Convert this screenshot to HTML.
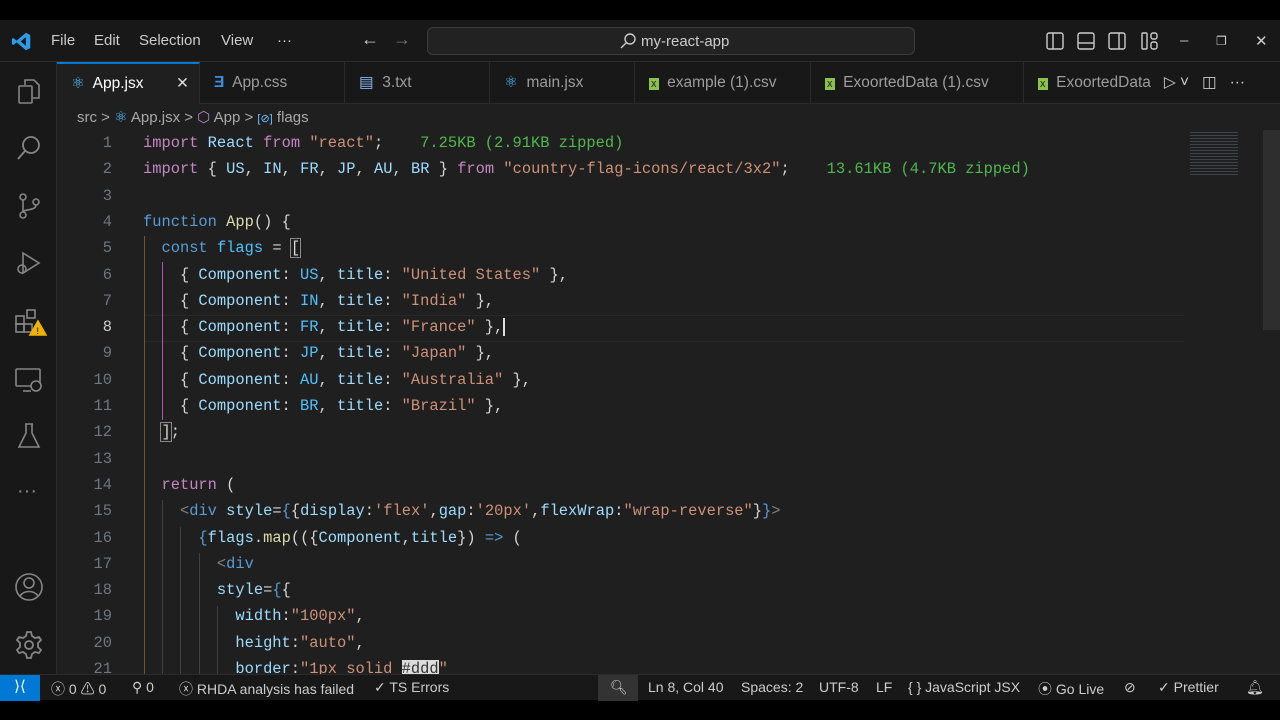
<!DOCTYPE html>
<html><head><meta charset="utf-8"><style>
*{margin:0;padding:0;box-sizing:border-box}
body{width:1280px;height:720px;background:#000;position:relative;overflow:hidden;font-family:"Liberation Sans",sans-serif;color:#ccc}
.abs{position:absolute}
#title{left:0;top:20px;width:1280px;height:42px;background:#181818;border-bottom:1px solid #2b2b2b}
#title .m{position:absolute;top:12px;font-size:15px;color:#ccc}
#search{left:427px;top:27px;width:488px;height:28px;border:1px solid #3c3c3c;border-radius:6px;background:#222;}
#act{left:0;top:62px;width:57px;height:612px;background:#181818;border-right:1px solid #2b2b2b}
#tabs{left:57px;top:62px;width:1223px;height:42px;background:#181818;border-bottom:1px solid #2b2b2b}
.tab{position:absolute;top:0;height:42px;border-right:1px solid #2b2b2b;font-size:15.5px;color:#9d9d9d;line-height:42px;padding-left:14px}
.tab.a{background:#1f1f1f;color:#fff;border-top:2px solid #0078d4;line-height:40px}
#editor{left:57px;top:104px;width:1223px;height:570px;background:#1f1f1f}
#crumb{left:77px;top:108px;font-size:15px;color:#a9a9a9}
.ln{position:absolute;left:60px;width:52px;text-align:right;font-family:"Liberation Mono",monospace;font-size:15.4px;color:#6e7681}
.code{position:absolute;left:143px;font-family:"Liberation Mono",monospace;font-size:15.4px;white-space:pre;color:#d4d4d4}
.k{color:#c586c0}.b{color:#569cd6}.f{color:#dcdcaa}.v{color:#9cdcfe}.c{color:#4fc1ff}.s{color:#ce9178}.g{color:#4eb84e}.p{color:#d4d4d4}.y{color:#ffd700}.pk{color:#da70d6}.bl{color:#179fff}
.guide{position:absolute;width:1px;background:#404040}
#status{left:0;top:674px;width:1280px;height:26px;background:#181818;border-top:1px solid #2b2b2b;font-size:14px;color:#ccc}
#status span{position:absolute;top:4px}
</style></head><body>
<div id="title" class="abs">
 <svg class="abs" style="left:11px;top:11px" width="21" height="21" viewBox="0 0 24 24"><path d="M17 2l5 2.5v15L17 22 6.5 13 2.5 16 1 15V9l1.5-1 4 3L17 2zm0 5l-6 5 6 5z" fill="#2b9de8"/></svg>
 <span class="m" style="left:51px">File</span><span class="m" style="left:94px">Edit</span><span class="m" style="left:139px">Selection</span><span class="m" style="left:221px">View</span><span class="m" style="left:277px">···</span>
 <span class="m" style="left:361px;font-size:18px;top:9px">←</span><span class="m" style="left:393px;font-size:18px;top:9px;color:#777">→</span>
 <span class="m" style="left:1180px;color:#bbb">–</span><span class="m" style="left:1216px;font-size:12px;top:14px">❐</span><span class="m" style="left:1255px">✕</span>
 <svg class="abs" style="left:1045px;top:12px" width="124" height="18" viewBox="0 0 124 18" fill="none" stroke="#ccc" stroke-width="1.4"><rect x="2" y="1" width="16" height="16" rx="2"/><line x1="8" y1="1" x2="8" y2="17"/><rect x="33" y="1" width="16" height="16" rx="2"/><line x1="33" y1="11" x2="49" y2="11"/><rect x="64" y="1" width="16" height="16" rx="2"/><line x1="74" y1="1" x2="74" y2="17"/><rect x="97" y="1" width="5" height="16" rx="1"/><rect x="106" y="1" width="6" height="6" rx="2"/><rect x="106" y="10" width="6" height="7" rx="2"/></svg>
</div>
<div id="search" class="abs"><svg class="abs" style="left:191px;top:4px" width="18" height="18" viewBox="0 0 18 18" fill="none" stroke="#ccc" stroke-width="1.4"><circle cx="11" cy="7" r="5"/><line x1="7.5" y1="10.5" x2="2" y2="16"/></svg><span class="abs" style="left:213px;top:5px;font-size:15px;color:#ccc">my-react-app</span></div>
<div id="act" class="abs">
 <svg class="abs" style="left:15px;top:15px" width="28" height="28" viewBox="0 0 28 28" fill="none" stroke="#868686" stroke-width="1.6"><path d="M10 8V3h9l5 5v13h-6"/><rect x="4" y="9" width="13" height="17" rx="1"/></svg>
 <svg class="abs" style="left:15px;top:72px" width="28" height="28" viewBox="0 0 28 28" fill="none" stroke="#868686" stroke-width="1.8"><circle cx="16" cy="11" r="8"/><line x1="10" y1="17" x2="3" y2="25"/></svg>
 <svg class="abs" style="left:15px;top:130px" width="28" height="28" viewBox="0 0 28 28" fill="none" stroke="#868686" stroke-width="1.6"><circle cx="8" cy="5" r="3"/><circle cx="8" cy="23" r="3"/><circle cx="21" cy="10" r="3"/><path d="M8 8v12M21 13c0 6-13 4-13 7"/></svg>
 <svg class="abs" style="left:15px;top:187px" width="28" height="28" viewBox="0 0 28 28" fill="none" stroke="#868686" stroke-width="1.6"><path d="M8 4l16 10-16 10z"/><circle cx="7" cy="20" r="4"/></svg>
 <svg class="abs" style="left:13px;top:245px" width="34" height="34" viewBox="0 0 34 34" fill="none" stroke="#868686" stroke-width="1.6"><rect x="3" y="9" width="8" height="8"/><rect x="3" y="17" width="8" height="8"/><rect x="11" y="17" width="8" height="8"/><rect x="14" y="3" width="8" height="8"/><path d="M25 14l8 14H17z" fill="#f0b400" stroke="#f0b400"/><text x="23.5" y="27" font-size="9" fill="#000" stroke="none" font-family="Liberation Sans">!</text></svg>
 <svg class="abs" style="left:14px;top:304px" width="30" height="28" viewBox="0 0 30 28" fill="none" stroke="#868686" stroke-width="1.6"><rect x="2" y="3" width="24" height="17" rx="1"/><line x1="9" y1="25" x2="17" y2="25"/><circle cx="22" cy="20" r="5" fill="#181818"/></svg>
 <svg class="abs" style="left:16px;top:360px" width="26" height="28" viewBox="0 0 26 28" fill="none" stroke="#868686" stroke-width="1.6"><path d="M9 2h8M10 2v9L3 25h20L16 11V2"/></svg>
 <span class="abs" style="left:17px;top:418px;color:#868686;font-size:20px">···</span>
 <svg class="abs" style="left:14px;top:510px" width="30" height="30" viewBox="0 0 30 30" fill="none" stroke="#868686" stroke-width="1.6"><circle cx="15" cy="15" r="13"/><circle cx="15" cy="11" r="5"/><path d="M6 24c4-6 14-6 18 0"/></svg>
 <svg class="abs" style="left:14px;top:568px" width="30" height="30" viewBox="0 0 30 30" fill="none" stroke="#868686" stroke-width="1.8"><circle cx="15" cy="15" r="4"/><path d="M13 2h4l1 4 3 2 4-1 2 3-3 3v4l3 3-2 3-4-1-3 2-1 4h-4l-1-4-3-2-4 1-2-3 3-3v-4l-3-3 2-3 4 1 3-2z"/></svg>
</div>
<div id="tabs" class="abs">
 <div class="tab a" style="left:0;width:143px"><span style="color:#4fc1ff">⚛</span>&nbsp; App.jsx<span style="position:absolute;left:119px;color:#ddd">✕</span></div>
 <div class="tab" style="left:143px;width:145px"><span style="color:#3d8fdc;font-weight:bold">Ǝ</span>&nbsp; App.css</div>
 <div class="tab" style="left:288px;width:145px"><span style="color:#8ab4f8">▤</span>&nbsp; 3.txt</div>
 <div class="tab" style="left:433px;width:145px"><span style="color:#4fc1ff">⚛</span>&nbsp; main.jsx</div>
 <div class="tab" style="left:578px;width:176px"><span style="background:#8bc34a;color:#1f1f1f;font-size:11px;padding:0 2px">x</span>&nbsp; example (1).csv</div>
 <div class="tab" style="left:754px;width:213px"><span style="background:#8bc34a;color:#1f1f1f;font-size:11px;padding:0 2px">x</span>&nbsp; ExoortedData (1).csv</div>
 <div class="tab" style="left:967px;width:256px;border:none"><span style="background:#8bc34a;color:#1f1f1f;font-size:11px;padding:0 2px">x</span>&nbsp; ExoortedData&nbsp;&nbsp; <span style="color:#ccc">▷ ˅ &nbsp; ◫ &nbsp; ···</span></div>
</div>
<div id="editor" class="abs"></div>
<div id="crumb" class="abs">src &gt; <span style="color:#4fc1ff">⚛</span> App.jsx &gt; <span style="color:#b180d7">⬡</span> App &gt; <span style="color:#75beff;font-size:11px">[⊘]</span> flags</div>
<div class="abs" style="left:144px;top:315px;width:1040px;height:27px;border-top:1px solid #282828;border-bottom:1px solid #282828"></div>
<div class="abs" style="left:1190px;top:130px;width:48px;height:46px;opacity:.35;background:repeating-linear-gradient(#1f1f1f 0 2px,#7a8aa0 2px 3px)"></div>
<div class="abs" style="left:1263px;top:130px;width:17px;height:200px;background:#2e2e2e"></div>
<div class="guide" style="left:144px;top:236px;height:438px;background:#6a5a2a"></div>
<div class="guide" style="left:162px;top:262px;height:158px;background:#a65fa6"></div>
<div class="guide" style="left:162px;top:500px;height:174px"></div>
<div class="guide" style="left:180px;top:527px;height:147px"></div>
<div class="guide" style="left:199px;top:553px;height:121px"></div>
<div class="guide" style="left:217px;top:606px;height:68px"></div>
<div id="lines"></div>
<div class="abs" style="left:0;top:0;width:1280px;height:20px;background:#000"></div>
<div id="status" class="abs">
 <div class="abs" style="left:0;top:0;width:40px;height:26px;background:#0078d4;color:#fff;font-size:15px;text-align:center;line-height:24px">⟩⟨</div>
 <span style="left:51px">ⓧ 0 ⚠ 0</span><span style="left:132px">⚲ 0</span><span style="left:179px">ⓧ RHDA analysis has failed</span><span style="left:374px">✓ TS Errors</span>
 <div class="abs" style="left:598px;top:0;width:40px;height:26px;background:#333"></div><span style="left:610px">🔍︎</span>
 <span style="left:648px">Ln 8, Col 40</span><span style="left:741px">Spaces: 2</span><span style="left:819px">UTF-8</span><span style="left:876px">LF</span><span style="left:908px">{ } JavaScript JSX</span><span style="left:1038px">⦿ Go Live</span><span style="left:1124px">⊘</span><span style="left:1158px">✓ Prettier</span><span style="left:1246px">🔔︎</span>
</div>
<script>
const L=[
'<span class="k">import</span> <span class="v">React</span> <span class="k">from</span> <span class="s">"react"</span>;    <span class="g">7.25KB (2.91KB zipped)</span>',
'<span class="k">import</span> { <span class="v">US</span>, <span class="v">IN</span>, <span class="v">FR</span>, <span class="v">JP</span>, <span class="v">AU</span>, <span class="v">BR</span> } <span class="k">from</span> <span class="s">"country-flag-icons/react/3x2"</span>;    <span class="g">13.61KB (4.7KB zipped)</span>',
'',
'<span class="b">function</span> <span class="f">App</span>() {',
'  <span class="b">const</span> <span class="c">flags</span> = <span style="outline:1px solid #888">[</span>',
'    { <span class="v">Component</span>: <span class="c">US</span>, <span class="v">title</span>: <span class="s">"United States"</span> },',
'    { <span class="v">Component</span>: <span class="c">IN</span>, <span class="v">title</span>: <span class="s">"India"</span> },',
'    { <span class="v">Component</span>: <span class="c">FR</span>, <span class="v">title</span>: <span class="s">"France"</span> },<span style="border-left:2px solid #ddd"></span>',
'    { <span class="v">Component</span>: <span class="c">JP</span>, <span class="v">title</span>: <span class="s">"Japan"</span> },',
'    { <span class="v">Component</span>: <span class="c">AU</span>, <span class="v">title</span>: <span class="s">"Australia"</span> },',
'    { <span class="v">Component</span>: <span class="c">BR</span>, <span class="v">title</span>: <span class="s">"Brazil"</span> },',
'  <span style="outline:1px solid #888">]</span>;',
'',
'  <span class="k">return</span> (',
'    <span style="color:#808080">&lt;</span><span class="b">div</span> <span class="v">style</span>=<span class="b">{</span>{<span class="v">display</span>:<span class="s">\'flex\'</span>,<span class="v">gap</span>:<span class="s">\'20px\'</span>,<span class="v">flexWrap</span>:<span class="s">"wrap-reverse"</span>}<span class="b">}</span><span style="color:#808080">&gt;</span>',
'      <span class="b">{</span><span class="v">flags</span>.<span class="f">map</span>(({<span class="v">Component</span>,<span class="v">title</span>}) <span class="b">=&gt;</span> (',
'        <span style="color:#808080">&lt;</span><span class="b">div</span>',
'        <span class="v">style</span>=<span class="b">{</span>{',
'          <span class="v">width</span>:<span class="s">"100px"</span>,',
'          <span class="v">height</span>:<span class="s">"auto"</span>,',
'          <span class="v">border</span>:<span class="s">"1px solid <span style="background:#ddd;color:#333">#ddd</span>"</span>'];
let h='';
L.forEach((t,i)=>{const y=143+i*26.3-9;
h+=`<div class="ln" style="top:${y}px;${i==7?'color:#ccc':''}">${i+1}</div><div class="code" style="top:${y}px">${t}</div>`;});
document.getElementById('lines').innerHTML=h;
</script>
</body></html>
